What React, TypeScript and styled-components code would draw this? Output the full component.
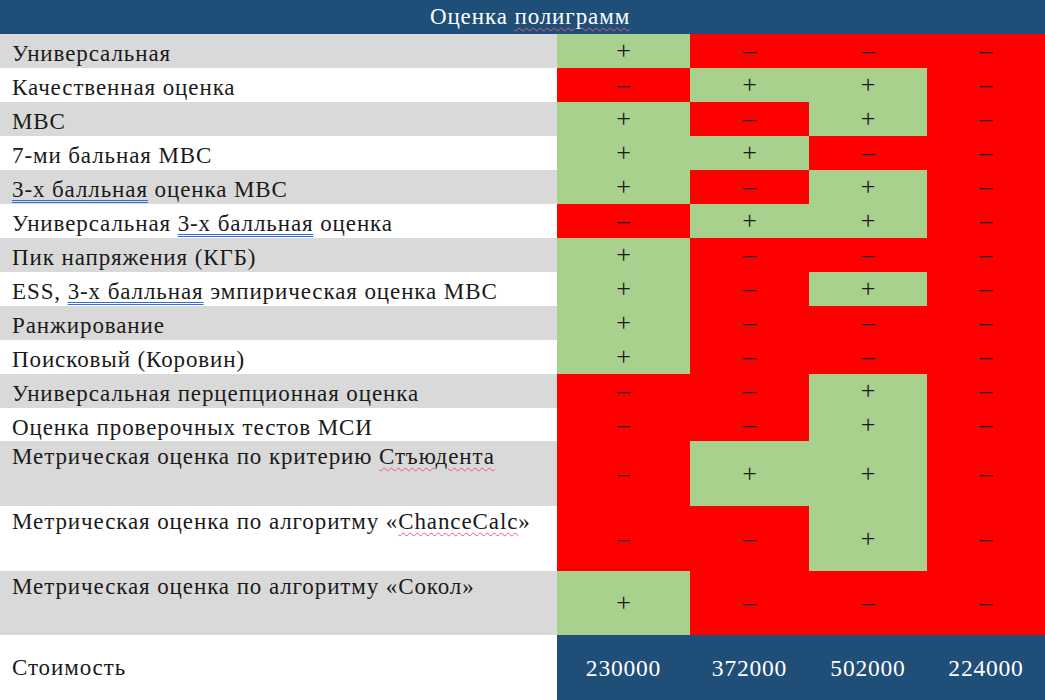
import React from 'react'
import styled, { createGlobalStyle, css } from 'styled-components'

const GlobalStyle = createGlobalStyle`
  *, *::before, *::after {
    box-sizing: border-box;
  }
  html, body {
    margin: 0;
    padding: 0;
    background: #ffffff;
  }
  body {
    font-family: "Liberation Serif", "Times New Roman", serif;
    width: 1045px;
    height: 700px;
    overflow: hidden;
  }
`

const colors = {
  blue: '#1f4e79',
  gray: '#d9d9d9',
  green: '#a9d18e',
  red: '#ff0000',
  ink: '#1a1a1a',
}

type Mark = '+' | '-'

type RowData = {
  label: React.ReactNode
  marks: Mark[]
  tall?: boolean
  height: number
}

const Spell = styled.span`
  text-decoration: underline wavy #e06070;
  text-decoration-thickness: 1px;
  text-underline-offset: 3px;
`

const Grammar = styled.span`
  text-decoration: underline double #2f6fd6;
  text-decoration-thickness: 1px;
  text-underline-offset: 3px;
`

const rows: RowData[] = [
  { label: 'Универсальная', marks: ['+', '-', '-', '-'], height: 34 },
  { label: 'Качественная оценка', marks: ['-', '+', '+', '-'], height: 34 },
  { label: 'МВС', marks: ['+', '-', '+', '-'], height: 34 },
  { label: '7-ми бальная МВС', marks: ['+', '+', '-', '-'], height: 34 },
  {
    label: (
      <>
        <Grammar>3-х балльная</Grammar> оценка МВС
      </>
    ),
    marks: ['+', '-', '+', '-'],
    height: 34,
  },
  {
    label: (
      <>
        Универсальная <Grammar>3-х балльная</Grammar> оценка
      </>
    ),
    marks: ['-', '+', '+', '-'],
    height: 34,
  },
  { label: 'Пик напряжения (КГБ)', marks: ['+', '-', '-', '-'], height: 34 },
  {
    label: (
      <>
        ESS, <Grammar>3-х балльная</Grammar> эмпирическая оценка МВС
      </>
    ),
    marks: ['+', '-', '+', '-'],
    height: 34,
  },
  { label: 'Ранжирование', marks: ['+', '-', '-', '-'], height: 34 },
  { label: 'Поисковый (Коровин)', marks: ['+', '-', '-', '-'], height: 34 },
  { label: 'Универсальная перцепционная оценка', marks: ['-', '-', '+', '-'], height: 34 },
  { label: 'Оценка проверочных тестов МСИ', marks: ['-', '-', '+', '-'], height: 33 },
  {
    label: (
      <>
        Метрическая оценка по критерию <Spell>Стъюдента</Spell>
      </>
    ),
    marks: ['-', '+', '+', '-'],
    tall: true,
    height: 65,
  },
  {
    label: (
      <>
        Метрическая оценка по алгоритму «<Spell>ChanceCalc</Spell>»
      </>
    ),
    marks: ['-', '-', '+', '-'],
    tall: true,
    height: 65,
  },
  {
    label: 'Метрическая оценка по алгоритму «Сокол»',
    marks: ['+', '-', '-', '-'],
    tall: true,
    height: 64,
  },
]

const prices = ['230000', '372000', '502000', '224000']

const Table = styled.div`
  display: grid;
  grid-template-columns: 557px 133px 119px 118px 118px;
  width: 1045px;
  font-family: "Liberation Serif", "Times New Roman", serif;
  font-size: 23px;
  letter-spacing: 0.9px;
  line-height: 26px;
`

const Header = styled.div`
  grid-column: 1 / -1;
  height: 34px;
  background: ${colors.blue};
  color: #ffffff;
  display: flex;
  align-items: center;
  justify-content: center;
  padding-left: 15px;
`

const LabelCell = styled.div<{ $striped: boolean; $tall?: boolean; $height: number }>`
  height: ${({ $height }) => $height}px;
  background: ${({ $striped }) => ($striped ? colors.gray : '#ffffff')};
  color: ${colors.ink};
  padding-left: 12px;
  white-space: nowrap;
  ${({ $tall }) =>
    $tall
      ? css`
          padding-top: 3px;
        `
      : css`
          padding-top: 7px;
        `}
`

const MarkCell = styled.div<{ $ok: boolean; $height: number }>`
  height: ${({ $height }) => $height}px;
  background: ${({ $ok }) => ($ok ? colors.green : colors.red)};
  color: ${colors.ink};
  font-size: 26px;
  letter-spacing: 0;
  display: flex;
  align-items: center;
  justify-content: center;
`

const CostLabel = styled.div`
  height: 65px;
  background: #ffffff;
  color: ${colors.ink};
  padding-left: 12px;
  display: flex;
  align-items: center;
`

const CostCell = styled.div`
  height: 65px;
  background: ${colors.blue};
  color: #ffffff;
  font-size: 23.5px;
  letter-spacing: 0.8px;
  display: flex;
  align-items: center;
  justify-content: center;
`

const App: React.FC = () => {
  return (
    <>
      <GlobalStyle />
      <Table>
        <Header>
          Оценка&nbsp;<Spell>полиграмм</Spell>
        </Header>

        {rows.map((row, i) => (
          <React.Fragment key={i}>
            <LabelCell $striped={i % 2 === 0} $tall={row.tall} $height={row.height}>
              {row.label}
            </LabelCell>
            {row.marks.map((m, j) => (
              <MarkCell key={j} $ok={m === '+'} $height={row.height}>
                {m === '+' ? '+' : '–'}
              </MarkCell>
            ))}
          </React.Fragment>
        ))}

        <CostLabel>Стоимость</CostLabel>
        {prices.map((p) => (
          <CostCell key={p}>{p}</CostCell>
        ))}
      </Table>
    </>
  )
}

export default App
